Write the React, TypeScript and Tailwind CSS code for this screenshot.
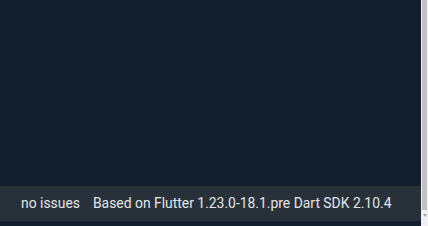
export default function App() {
  return (
    <div className="flex h-[226px] w-[428px] overflow-hidden bg-[#131f2f]" style={{ fontFamily: 'Roboto, "Noto Sans", sans-serif' }}>
      <div className="flex min-w-0 flex-1 flex-col">
        <div className="flex-1" />
        <div className="flex h-[35px] items-center gap-[13px] bg-[#283139] pl-[21px] text-[13.9px] text-[#e3e6e8]">
          <span>no issues</span>
          <span>Based on Flutter 1.23.0-18.1.pre Dart SDK 2.10.4</span>
        </div>
        <div className="h-[5px]" />
      </div>
      <div className="flex w-[7px] flex-col bg-[#f1f1f1]">
        <div className="ml-[1px] h-[210px] w-[5px] bg-[#c1c1c1]" />
        <div className="flex flex-1 items-start justify-center pt-[4px]">
          <div className="h-0 w-0 border-l-[2px] border-r-[2px] border-t-[3px] border-l-transparent border-r-transparent border-t-[#a3a3a3]" />
        </div>
      </div>
    </div>
  );
}
